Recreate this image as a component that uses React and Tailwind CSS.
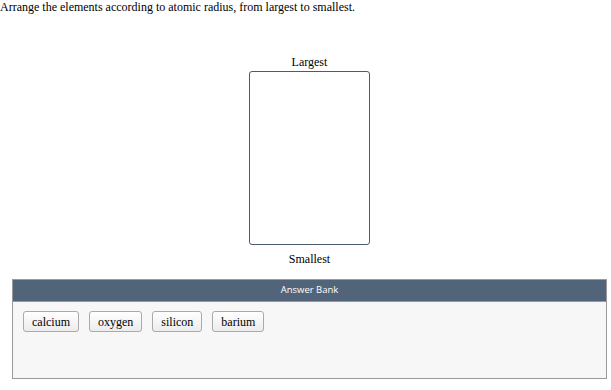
import React from 'react';

const serif = { fontFamily: '"Liberation Serif", "Times New Roman", serif' };

const items = ['calcium', 'oxygen', 'silicon', 'barium'];

const App = () => {
  return (
    <div className="w-[611px] h-[390px] bg-white text-black overflow-hidden" style={serif}>
      <p className="text-[12px] leading-[14px]">
        Arrange the elements according to atomic radius, from largest to smallest.
      </p>

      <div className="ml-[12px] w-[595px] mt-[41px] flex flex-col items-center">
        <div className="text-[12px] leading-[14px]">Largest</div>
        <div className="mt-[2px] w-[121px] h-[174px] border border-[#4b5b70] rounded-[3px] bg-white" />
        <div className="mt-[7px] text-[12px] leading-[14px]">Smallest</div>
      </div>

      <div className="ml-[12px] mt-[13px] w-[595px] h-[100px] border border-[#9a9a9a] bg-[#f7f7f7] flex flex-col">
        <div
          className="h-[22px] bg-[#526479] border-b border-[#8c9bb0] flex items-center justify-center text-white text-[9.5px]"
          style={{ fontFamily: '"Open Sans", "DejaVu Sans", sans-serif' }}
        >
          Answer Bank
        </div>
        <div className="flex gap-[10px] pl-[10px] pt-[9px]">
          {items.map((item) => (
            <div
              key={item}
              className="h-[21px] px-[8px] flex items-center text-[12px] border border-[#aaaaaa] rounded-[3px] bg-gradient-to-b from-white to-[#ececec]"
            >
              {item}
            </div>
          ))}
        </div>
      </div>
    </div>
  );
};

export default App;
